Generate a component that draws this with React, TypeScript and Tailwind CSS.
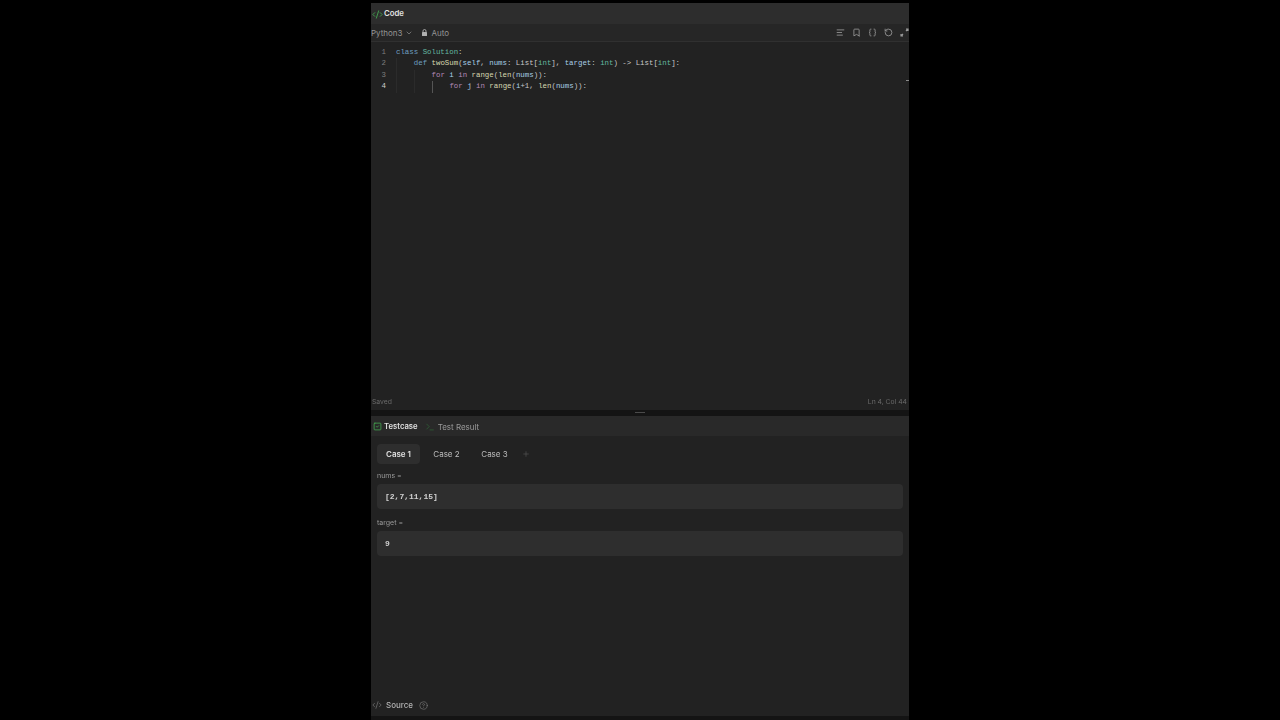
import { Bookmark, Braces, ChevronDown, CodeXml, AlignLeft, RotateCcw, Plus, SquareCheck, Terminal, CircleHelp } from 'lucide-react';

const kw = 'text-[#b58ab8]';
const blue = 'text-[#6f9fc0]';
const teal = 'text-[#62b8a0]';
const fn = 'text-[#d8d8b0]';
const vr = 'text-[#a8cfe8]';
const pl = 'text-[#c8c8c8]';

const codeLines = [
  {
    n: 1,
    indent: 0,
    parts: [
      ['class ', blue],
      ['Solution', teal],
      [':', pl],
    ],
  },
  {
    n: 2,
    indent: 1,
    parts: [
      ['def ', blue],
      ['twoSum', fn],
      ['(', pl],
      ['self', vr],
      [', ', pl],
      ['nums', vr],
      [': List[', pl],
      ['int', teal],
      ['], ', pl],
      ['target', vr],
      [': ', pl],
      ['int', teal],
      [') -> List[', pl],
      ['int', teal],
      [']:', pl],
    ],
  },
  {
    n: 3,
    indent: 2,
    parts: [
      ['for ', kw],
      ['i ', vr],
      ['in ', kw],
      ['range', fn],
      ['(', pl],
      ['len', fn],
      ['(', pl],
      ['nums', vr],
      [')):', pl],
    ],
  },
  {
    n: 4,
    indent: 3,
    parts: [
      ['for ', kw],
      ['j ', vr],
      ['in ', kw],
      ['range', fn],
      ['(', pl],
      ['i', vr],
      ['+1, ', pl],
      ['len', fn],
      ['(', pl],
      ['nums', vr],
      ['))', pl],
      [':', pl],
    ],
  },
];

function CodeLine({ n, indent, parts }: { n: number; indent: number; parts: string[][] }) {
  return (
    <div className="flex h-[11.4px] items-center whitespace-pre">
      <span className={`w-[15px] shrink-0 text-right ${n === 4 ? 'text-[#d0d0d0]' : 'text-[#7d7d7d]'}`}>{n}</span>
      <span className="w-[10px] shrink-0" />
      <span className="flex h-full">
        {Array.from({ length: indent }).map((_, i) => (
          <span
            key={i}
            className={`h-full w-[17.8px] border-l ${n === 4 && i === 2 ? 'border-[#555555]' : 'border-[#2b2b2b]'}`}
          />
        ))}
      </span>
      {parts.map(([text, color], i) => (
        <span key={i} className={color}>
          {text}
        </span>
      ))}
    </div>
  );
}

function Field({ label, value }: { label: string; value: string }) {
  return (
    <div className="flex flex-col">
      <div className="h-[12px] text-[7px] leading-[12px] text-[#9a9a9a]">{label}</div>
      <div className="mt-[2px] flex h-[25px] items-center rounded-[4px] bg-[#2e2e2e] px-[8px] font-['Liberation_Mono',monospace] text-[8px] font-bold text-[#d0d0d0]">
        {value}
      </div>
    </div>
  );
}

export default function App() {
  return (
    <div className="flex h-[720px] w-full justify-center overflow-hidden bg-black font-['Inter','Liberation_Sans',sans-serif]">
      <div className="flex w-[538px] flex-col pt-[3px] blur-[0.35px]">
        <div className="flex h-[21px] shrink-0 items-center gap-[1px] bg-[#2d2d2d] pt-[1px] pl-[1px]">
          <CodeXml size={11} strokeWidth={1.8} className="text-[#45b052]" />
          <span className="text-[7.8px] font-semibold text-[#e0e0e0]">Code</span>
        </div>

        <div className="flex h-[18px] shrink-0 items-center justify-between border-b border-[#303030] bg-[#262626]">
          <div className="flex items-center text-[8px] text-[#959595]">
            <span>Python3</span>
            <ChevronDown size={8} className="ml-[2px]" />
            <svg width="7" height="7" viewBox="0 0 7 7" fill="none" className="ml-[8px] text-[#b0b0b0]">
              <rect x="1" y="3" width="5" height="4" rx="0.5" fill="currentColor" />
              <path d="M2 3V2a1.5 1.5 0 0 1 3 0v1" stroke="currentColor" strokeWidth="0.9" />
            </svg>
            <span className="ml-[4px]">Auto</span>
          </div>
          <div className="flex items-center gap-[7px] text-[#9a9a9a]">
            <AlignLeft size={9} strokeWidth={2.2} className="ml-[1px]" />
            <Bookmark size={9} strokeWidth={2.2} />
            <Braces size={9} strokeWidth={2.2} />
            <RotateCcw size={9} strokeWidth={2.2} />
            <svg width="9" height="9" viewBox="0 0 9 9" fill="none" stroke="currentColor" strokeWidth="1.2">
              <path d="M1 8l2-2M1 6v2h2M8 1L6 3M8 3V1H6" />
            </svg>
          </div>
        </div>

        <div className="relative flex h-[368px] shrink-0 flex-col bg-[#222222]">
          <div className="pt-[5px] font-['Liberation_Mono',monospace] text-[7.4px] leading-[11.4px]">
            {codeLines.map((line) => (
              <CodeLine key={line.n} n={line.n} indent={line.indent} parts={line.parts} />
            ))}
          </div>
          <div className="absolute top-[38px] right-0 h-[1px] w-[3px] bg-[#8a8a8a]" />
          <div className="absolute inset-x-0 bottom-[3px] flex items-center justify-between pr-[2px] pl-[1px] text-[6.8px] text-[#6a6a6a]">
            <span>Saved</span>
            <span>Ln 4, Col 44</span>
          </div>
        </div>

        <div className="relative h-[6px] shrink-0 bg-[#141414]">
          <div className="absolute top-[2px] left-1/2 h-[1px] w-[10px] -translate-x-1/2 bg-[#4a4a4a]" />
        </div>

        <div className="flex h-[20px] shrink-0 items-center bg-[#292929] pt-[1px] pl-[2px] text-[8px]">
          <SquareCheck size={9} strokeWidth={2} className="text-[#45b052]" />
          <span className="ml-[2px] text-[7.7px] font-semibold text-[#e0e0e0]">Testcase</span>
          <Terminal size={10} strokeWidth={1.6} className="ml-[7px] text-[#2f6b38]" />
          <span className="ml-[3px] text-[#9a9a9a]">Test Result</span>
        </div>

        <div className="flex min-h-0 flex-1 flex-col bg-[#222222] px-[6px]">
          <div className="mt-[8px] flex items-center text-[8px]">
            <span className="flex h-[20px] w-[43px] items-center justify-center rounded-[4px] bg-[#2e2e2e] font-semibold text-[#e0e0e0]">
              Case 1
            </span>
            <span className="ml-[5px] flex h-[20px] w-[43px] items-center justify-center text-[#bdbdbd]">Case 2</span>
            <span className="ml-[5px] flex h-[20px] w-[43px] items-center justify-center text-[#bdbdbd]">Case 3</span>
            <Plus size={8} className="ml-[6px] text-[#555555]" />
          </div>
          <div className="mt-[6px] flex flex-col gap-[8px]">
            <Field label="nums =" value="[2,7,11,15]" />
            <Field label="target =" value="9" />
          </div>
          <div className="mt-auto -ml-[6px] flex h-[22px] items-center pl-[1px] text-[#9a9a9a]">
            <CodeXml size={10} strokeWidth={1.5} className="text-[#808080]" />
            <span className="ml-[4px] text-[8px] font-medium text-[#b5b5b5]">Source</span>
            <CircleHelp size={9} strokeWidth={1.6} className="ml-[6px] text-[#808080]" />
          </div>
        </div>

        <div className="h-[4px] shrink-0 bg-[#141414]" />
      </div>
    </div>
  );
}
